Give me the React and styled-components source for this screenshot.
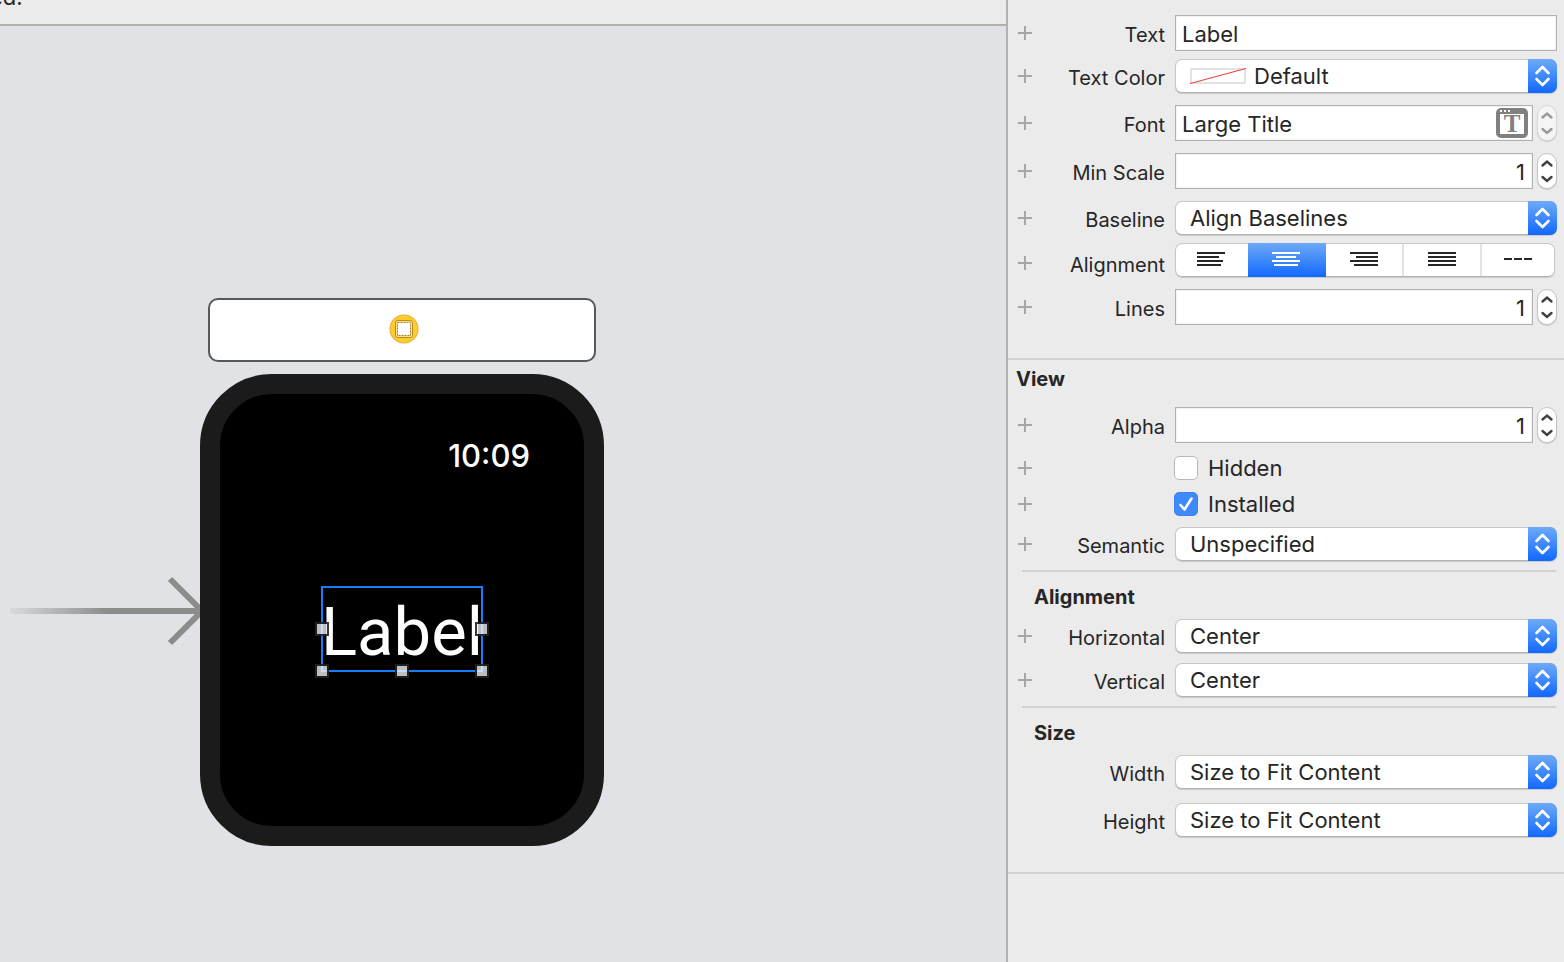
import React, { useState } from "react";
import styled, { createGlobalStyle } from "styled-components";

const ALIGNMENTS = [
  { name: "Left", lines: [[0, 28], [0, 22], [0, 26], [0, 24]] },
  { name: "Center", lines: [[0, 28], [4, 20], [0, 28], [2, 24]] },
  { name: "Right", lines: [[0, 28], [6, 22], [0, 28], [4, 24]] },
  { name: "Justified", lines: [[0, 28], [0, 28], [0, 28], [0, 28]] },
  { name: "Natural", lines: null },
];

function Plus({ name }) {
  return (
    <PlusButton type="button" aria-label={`Add variation for ${name}`}>
      <svg width="14" height="14" viewBox="0 0 14 14">
        <path d="M0 7H14M7 0V14" stroke="#a6a6a6" strokeWidth="2" />
      </svg>
    </PlusButton>
  );
}

function Row({ id, label, gap, tall, noPlus, children }) {
  return (
    <RowWrap $gap={gap} $tall={tall}>
      {noPlus ? <span /> : <Plus name={label} />}
      <RowLabel htmlFor={id}>{label}</RowLabel>
      {children}
    </RowWrap>
  );
}

function PopUp({ id, value, swatch }) {
  return (
    <PopUpWrap>
      <PopUpSelect id={id} defaultValue={value} $swatch={swatch}>
        <option>{value}</option>
      </PopUpSelect>
      {swatch && (
        <Swatch width="56" height="16" viewBox="0 0 56 16">
          <rect x="1" y="1" width="54" height="14" fill="#fff" stroke="#e3e3e3" strokeWidth="2" />
          <path d="M0 15.5L56 0.5" stroke="#f0484a" strokeWidth="1.2" />
        </Swatch>
      )}
      <PopUpCap>
        <svg width="29" height="34" viewBox="0 0 29 34" fill="none">
          <path
            d="M8.5 14L14.5 8L20.5 14M8.5 20L14.5 26L20.5 20"
            stroke="#fff"
            strokeWidth="2.6"
            strokeLinecap="round"
            strokeLinejoin="round"
          />
        </svg>
      </PopUpCap>
    </PopUpWrap>
  );
}

function Stepper({ name, disabled }) {
  return (
    <StepperWrap $disabled={disabled}>
      <StepButton type="button" aria-label={`Increase ${name}`} disabled={disabled}>
        <svg width="18" height="17" viewBox="0 0 18 17" fill="none">
          <path d="M4.5 11.5L9 7.5L13.5 11.5" stroke="currentColor" strokeWidth="2.4" strokeLinecap="round" />
        </svg>
      </StepButton>
      <StepButton type="button" aria-label={`Decrease ${name}`} disabled={disabled}>
        <svg width="18" height="17" viewBox="0 0 18 17" fill="none">
          <path d="M4.5 6L9 10L13.5 6" stroke="currentColor" strokeWidth="2.4" strokeLinecap="round" />
        </svg>
      </StepButton>
    </StepperWrap>
  );
}

function NumberField({ id, name }) {
  return (
    <FieldGroup>
      <Field id={id} defaultValue="1" inputMode="decimal" $right />
      <Stepper name={name} />
    </FieldGroup>
  );
}

function AlignIcon({ lines }) {
  return (
    <svg width="28" height="14" viewBox="0 0 28 14" fill="currentColor">
      {lines ? (
        lines.map(([x, w], i) => <rect key={i} x={x} y={i * 4} width={w} height="2" />)
      ) : (
        <path d="M0 6H8V8H0ZM10 6H18V8H10ZM20 6H28V8H20Z" />
      )}
    </svg>
  );
}

function Check({ id, label, gap, checked, onChange }) {
  return (
    <RowWrap $gap={gap}>
      <Plus name={label} />
      <span />
      <CheckLabel htmlFor={id}>
        <CheckBox id={id} type="checkbox" checked={checked} onChange={onChange} />
        {checked && (
          <CheckMark width="24" height="24" viewBox="0 0 24 24" fill="none">
            <path
              d="M6.5 13L10.5 17.5L17.5 6.5"
              stroke="#fff"
              strokeWidth="2.6"
              strokeLinecap="round"
              strokeLinejoin="round"
            />
          </CheckMark>
        )}
        {label}
      </CheckLabel>
    </RowWrap>
  );
}

function Canvas() {
  return (
    <CanvasArea>
      <EntryArrow width="200" height="72" viewBox="0 0 200 72" fill="none">
        <defs>
          <linearGradient id="tail" gradientUnits="userSpaceOnUse" x1="0" y1="0" x2="97" y2="0">
            <stop offset="0" stopColor="#8c8d8b" stopOpacity="0.1" />
            <stop offset="1" stopColor="#8c8d8b" />
          </linearGradient>
        </defs>
        <rect x="0" y="33" width="192" height="6" fill="url(#tail)" />
        <path d="M160 4L192 36L160 68" stroke="#8c8d8b" strokeWidth="6" />
      </EntryArrow>
      <Scene>
        <SceneDock>
          <svg width="34" height="32" viewBox="0 0 34 32">
            <circle cx="19" cy="15" r="14" fill="#fdcc2f" stroke="#eeb03c" strokeWidth="1.2" />
            <rect x="10.5" y="6.5" width="17" height="17" rx="2" fill="#fbe28a" stroke="#b38c26" />
            <rect x="12.5" y="8.5" width="13" height="13" fill="#fff" stroke="#a5812a" strokeDasharray="2 1" />
          </svg>
        </SceneDock>
        <Watch>
          <WatchStatus>10:09</WatchStatus>
          <WatchContent>
            <Selected>
              Label
              <Handle $x="-1px" $y="50%" />
              <Handle $x="calc(100% + 1px)" $y="50%" />
              <Handle $x="-1px" $y="calc(100% + 1px)" />
              <Handle $x="50%" $y="calc(100% + 1px)" />
              <Handle $x="calc(100% + 1px)" $y="calc(100% + 1px)" />
            </Selected>
          </WatchContent>
        </Watch>
      </Scene>
    </CanvasArea>
  );
}

function App() {
  const [alignment, setAlignment] = useState("Center");
  const [hidden, setHidden] = useState(false);
  const [installed, setInstalled] = useState(true);

  return (
    <Page>
      <GlobalStyle />
      <Editor>
        <MessageBar>
          <Message>ed.</Message>
        </MessageBar>
        <Canvas />
      </Editor>
      <Inspector>
        <Section $top={15} $bottom={33}>
          <Row id="text" label="Text" gap={0}>
            <FieldGroup>
              <Field id="text" defaultValue="Label" />
            </FieldGroup>
          </Row>
          <Row id="color" label="Text Color" gap={8}>
            <PopUp id="color" value="Default" swatch />
          </Row>
          <Row id="font" label="Font" gap={12}>
            <FieldGroup>
              <FontField>
                <Field id="font" defaultValue="Large Title" />
                <FontButton type="button" aria-label="Choose font">
                  <svg width="32" height="30" viewBox="0 0 32 30">
                    <rect width="32" height="30" rx="5" fill="#808080" />
                    <path d="M4 6H28V26H4ZM4 2H6V4H4ZM8 2H10V4H8ZM12 2H14V4H12Z" fill="#fff" />
                    <text
                      x="16"
                      y="24"
                      textAnchor="middle"
                      fontFamily="Liberation Serif, serif"
                      fontWeight="700"
                      fontSize="25"
                      fill="#808080"
                    >
                      T
                    </text>
                  </svg>
                </FontButton>
              </FontField>
              <Stepper name="Font" disabled />
            </FieldGroup>
          </Row>
          <Row id="scale" label="Min Scale" gap={12}>
            <NumberField id="scale" name="Min Scale" />
          </Row>
          <Row id="baseline" label="Baseline" gap={12}>
            <PopUp id="baseline" value="Align Baselines" />
          </Row>
          <Row label="Alignment" gap={8} tall>
            <Segments role="group" aria-label="Alignment">
              {ALIGNMENTS.map((item) => (
                <Segment
                  key={item.name}
                  type="button"
                  aria-label={item.name}
                  aria-pressed={alignment === item.name}
                  $on={alignment === item.name}
                  onClick={() => setAlignment(item.name)}
                >
                  <AlignIcon lines={item.lines} />
                </Segment>
              ))}
            </Segments>
          </Row>
          <Row id="lines" label="Lines" gap={6}>
            <NumberField id="lines" name="Lines" />
          </Row>
        </Section>

        <Section $top={0} $bottom={35}>
          <Heading>View</Heading>
          <Row id="alpha" label="Alpha" gap={0}>
            <NumberField id="alpha" name="Alpha" />
          </Row>
          <Check id="hidden" label="Hidden" gap={12} checked={hidden} onChange={() => setHidden(!hidden)} />
          <Check
            id="installed"
            label="Installed"
            gap={10}
            checked={installed}
            onChange={() => setInstalled(!installed)}
          />
          <Row id="semantic" label="Semantic" gap={10}>
            <PopUp id="semantic" value="Unspecified" />
          </Row>
          <Divider />
          <SubHeading>Alignment</SubHeading>
          <Row id="horizontal" label="Horizontal" gap={0}>
            <PopUp id="horizontal" value="Center" />
          </Row>
          <Row id="vertical" label="Vertical" gap={10}>
            <PopUp id="vertical" value="Center" />
          </Row>
          <Divider />
          <SubHeading>Size</SubHeading>
          <Row id="width" label="Width" gap={0} noPlus>
            <PopUp id="width" value="Size to Fit Content" />
          </Row>
          <Row id="height" label="Height" gap={14} noPlus>
            <PopUp id="height" value="Size to Fit Content" />
          </Row>
        </Section>
      </Inspector>
    </Page>
  );
}

const GlobalStyle = createGlobalStyle`
  * {
    box-sizing: border-box;
  }
  body {
    margin: 0;
    background-color: #ebebeb;
    color: #262626;
    font-family: Inter, "Liberation Sans", sans-serif;
  }
  button, input, select {
    font-family: inherit;
    color: inherit;
    margin: 0;
    outline: none;
  }
  svg {
    display: block;
  }
`;

const Page = styled.div`
  display: flex;
  min-height: 100vh;
`;

const Editor = styled.main`
  flex: 1;
  min-width: 0;
  display: flex;
  flex-direction: column;
`;

const MessageBar = styled.div`
  height: 26px;
  overflow: hidden;
  border-bottom: 2px solid #b1b1b0;
`;

const Message = styled.div`
  margin: -16px 0 0 -10px;
  font-size: 22px;
  line-height: 26px;
`;

const CanvasArea = styled.div`
  position: relative;
  flex: 1;
  overflow: hidden;
  background-color: #e1e2e6;
`;

const EntryArrow = styled.svg`
  position: absolute;
  left: 10px;
  top: 549px;
`;

const Scene = styled.div`
  position: absolute;
  left: 200px;
  top: 272px;
`;

const SceneDock = styled.div`
  display: flex;
  align-items: center;
  justify-content: center;
  height: 64px;
  margin: 0 8px 12px;
  border: 2px solid #585858;
  border-radius: 10px;
  background-color: white;
`;

const Watch = styled.div`
  display: grid;
  width: 404px;
  height: 472px;
  border: 20px solid #1b1b1b;
  border-radius: 72px;
  background-color: black;
  color: white;
`;

const WatchStatus = styled.div`
  grid-area: 1 / 1;
  justify-self: end;
  padding: 44px 54px 0 0;
  font-size: 31px;
  font-weight: 500;
  line-height: 36px;
`;

const WatchContent = styled.div`
  grid-area: 1 / 1;
  display: flex;
  align-items: center;
  justify-content: center;
  padding-top: 38px;
`;

const Selected = styled.div`
  position: relative;
  display: flex;
  justify-content: center;
  width: 162px;
  height: 86px;
  border: 2px solid #147eff;
  font-family: Roboto, "Liberation Sans", sans-serif;
  font-size: 67px;
  line-height: 88px;
`;

const Handle = styled.span`
  position: absolute;
  left: ${(props) => props.$x};
  top: ${(props) => props.$y};
  width: 14px;
  height: 14px;
  margin: -7px;
  border: 2px solid rgba(34, 34, 34, 0.9);
  background-color: rgba(255, 255, 255, 0.75);
  background-clip: padding-box;
`;

const Inspector = styled.aside`
  width: 558px;
  flex-shrink: 0;
  border-left: 2px solid #b1b1b1;
  background-color: #ebebeb;
`;

const Section = styled.section`
  padding: ${(props) => props.$top}px 7px ${(props) => props.$bottom}px 10px;
  border-bottom: 2px solid #d2d2d2;
`;

const Heading = styled.h2`
  height: 47px;
  margin: 0 0 0 -2px;
  padding-top: 6px;
  font-size: 20px;
  line-height: 26px;
  font-weight: 700;
`;

const SubHeading = styled.h3`
  height: 47px;
  margin: 0 0 0 16px;
  padding-top: 12px;
  font-size: 20px;
  line-height: 26px;
  font-weight: 700;
`;

const Divider = styled.hr`
  height: 2px;
  margin: 9px 1px 0 4px;
  border: none;
  background-color: #d2d2d2;
`;

const RowWrap = styled.div`
  display: grid;
  grid-template-columns: 14px 134px 1fr;
  align-items: center;
  margin-top: ${(props) => props.$gap}px;
  height: ${(props) => (props.$tall ? "40px" : "auto")};
`;

const PlusButton = styled.button`
  padding: 0;
  border: none;
  background: none;
`;

const RowLabel = styled.label`
  padding: 3px 1px 0 0;
  text-align: right;
  font-size: 20px;
  line-height: 26px;
  white-space: nowrap;
`;

const Field = styled.input`
  width: 100%;
  min-width: 0;
  height: 36px;
  padding: 2px 7px 0 6px;
  border: 1px solid #b1b1b1;
  border-radius: 0;
  background-color: white;
  box-shadow: inset 0 0 0 1px #f3f3f3;
  font-size: 22px;
  text-align: ${(props) => (props.$right ? "right" : "left")};
`;

const FieldGroup = styled.div`
  display: flex;
  gap: 4px;
  margin-left: 9px;
`;

const FontField = styled.div`
  position: relative;
  flex: 1;
`;

const FontButton = styled.button`
  position: absolute;
  right: 5px;
  top: 3px;
  padding: 0;
  border: none;
  background: none;
`;

const StepperWrap = styled.div`
  display: flex;
  flex-direction: column;
  width: 20px;
  height: 36px;
  flex-shrink: 0;
  border: 1px solid ${(props) => (props.$disabled ? "#d6d6d6" : "#c4c4c4")};
  border-radius: 10px;
  background-color: ${(props) => (props.$disabled ? "#f5f5f5" : "white")};
  color: ${(props) => (props.$disabled ? "#9a9a9a" : "#404040")};
  box-shadow: 0 1px 1px rgba(0, 0, 0, 0.15);
`;

const StepButton = styled.button`
  flex: 1;
  padding: 0;
  border: none;
  background: none;
  color: inherit;
`;

const PopUpWrap = styled.div`
  position: relative;
  margin-left: 9px;
`;

const PopUpSelect = styled.select`
  display: block;
  appearance: none;
  width: 100%;
  height: 34px;
  padding: 0 40px 0 ${(props) => (props.$swatch ? 78 : 14)}px;
  border: 1px solid #c6c6c6;
  border-bottom-color: #b4b4b4;
  border-radius: 7px;
  background-color: white;
  box-shadow: 0 1px 1px rgba(0, 0, 0, 0.15);
  font-size: 22px;
`;

const PopUpCap = styled.span`
  position: absolute;
  right: 0;
  top: 0;
  border-radius: 0 7px 7px 0;
  background: linear-gradient(#6eaaf8, #1068fe);
  pointer-events: none;
`;

const Swatch = styled.svg`
  position: absolute;
  left: 15px;
  top: 9px;
  pointer-events: none;
`;

const Segments = styled.div`
  display: grid;
  grid-template-columns: 73fr 78fr 78fr 78fr 73fr;
  align-self: start;
  height: 34px;
  margin: 0 2px 0 9px;
  border-radius: 7px;
  background-color: white;
  box-shadow: 0 1px 1px rgba(0, 0, 0, 0.15);
`;

const Segment = styled.button`
  display: flex;
  align-items: center;
  justify-content: center;
  padding: 0 2px 2px 0;
  border: solid #c6c6c6;
  border-width: ${(props) => (props.$on ? "0" : "1px 0")};
  border-bottom-color: #b4b4b4;
  background: ${(props) => (props.$on ? "linear-gradient(#6eaaf8, #1068fe)" : "white")};
  color: ${(props) => (props.$on ? "white" : "#262626")};
  &:first-child {
    border-left-width: 1px;
    border-radius: 7px 0 0 7px;
  }
  &:nth-child(3),
  &:nth-child(4) {
    box-shadow: inset -2px 0 0 #e3e3e3;
  }
  &:last-child {
    padding-right: 0;
    border-right-width: 1px;
    border-radius: 0 7px 7px 0;
  }
`;

const CheckLabel = styled.label`
  position: relative;
  display: flex;
  align-items: center;
  gap: 10px;
  margin-left: 8px;
  font-size: 22px;
  line-height: 26px;
`;

const CheckBox = styled.input`
  appearance: none;
  width: 24px;
  height: 24px;
  border: 1px solid #b8b8b8;
  border-radius: 5px;
  background-color: white;
  &:checked {
    border-color: #3b82f5;
    background-color: #3f8af9;
  }
`;

const CheckMark = styled.svg`
  position: absolute;
  left: 0;
  top: 1px;
  pointer-events: none;
`;

export default App;
